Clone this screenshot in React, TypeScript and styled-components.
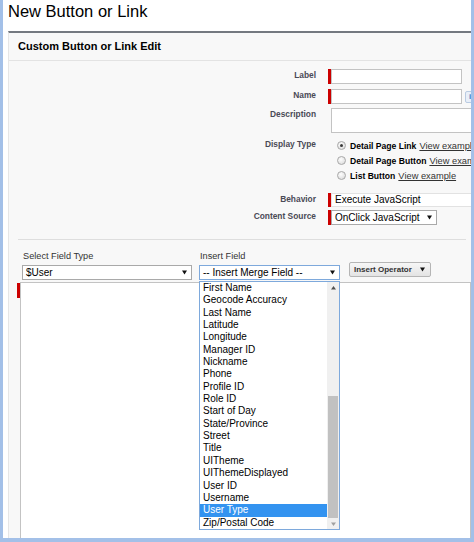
import React from "react";
import styled, { createGlobalStyle } from "styled-components";

const Global = createGlobalStyle`
  html, body { margin: 0; padding: 0; background: #fff; }
  body { font-family: "Liberation Sans", Arial, sans-serif; }
`;

const Frame = styled.div`
  position: relative;
  width: 474px;
  height: 542px;
  box-sizing: border-box;
  border-left: 3px solid #a3c0e8;
  border-right: 3px solid #a3c0e8;
  border-bottom: 4px solid #a3c0e8;
  background: #fff;
  display: flex;
  flex-direction: column;
  overflow: hidden;
  font-family: "Liberation Sans", Arial, sans-serif;
`;

const Title = styled.h1`
  margin: 0;
  height: 31px;
  box-sizing: border-box;
  padding: 2px 0 0 5px;
  font-size: 16.5px;
  line-height: 18px;
  font-weight: normal;
  color: #000;
  white-space: nowrap;
`;

const Panel = styled.div`
  flex: 1;
  min-height: 0;
  margin-left: 5px;
  display: flex;
  flex-direction: column;
  background: #f8f8f8;
  border-top: 2px solid #747980;
  border-left: 1px solid #e6e6e6;
`;

const PanelHeader = styled.div`
  height: 27px;
  line-height: 27px;
  padding-left: 9px;
  font-size: 11px;
  font-weight: bold;
  color: #000;
  border-bottom: 1px solid #e3e3e3;
  white-space: nowrap;
`;

const Form = styled.div`
  padding-top: 8px;
  display: flex;
  flex-direction: column;
`;

const FormRow = styled.div<{ $mt: number; $h: number }>`
  display: grid;
  grid-template-columns: 307px 1fr;
  column-gap: 12px;
  margin-top: ${(p) => p.$mt}px;
  height: ${(p) => p.$h}px;
`;

const FieldLabel = styled.div`
  text-align: right;
  font-size: 8.4px;
  font-weight: bold;
  line-height: 12px;
  color: #4a4a56;
  white-space: nowrap;
`;

const FieldCell = styled.div`
  display: flex;
  align-items: flex-start;
  min-width: 0;
  white-space: nowrap;
`;

const RequiredBar = styled.span<{ $h?: number }>`
  flex: none;
  width: 3px;
  height: ${(p) => p.$h ?? 15}px;
  background: #c00;
`;

const TextInput = styled.span<{ $w: number; $h?: number }>`
  flex: none;
  box-sizing: border-box;
  width: ${(p) => p.$w}px;
  height: ${(p) => p.$h ?? 15}px;
  background: #fff;
  border: 1px solid #c3c3c3;
`;

const TextBox = styled(TextInput)`
  margin-left: 3px;
`;

const InfoIcon = styled.span`
  flex: none;
  margin: 2px 0 0 3px;
  width: 10px;
  height: 12px;
  box-sizing: border-box;
  border: 1px solid #b9cbe2;
  border-radius: 2px;
  background: #e9eff8;
  color: #3a78c3;
  font-size: 8px;
  font-weight: bold;
  line-height: 10px;
  text-align: center;
`;

const Options = styled.div`
  padding-left: 9px;
  display: flex;
  flex-direction: column;
`;

const OptionLine = styled.div`
  height: 15px;
  display: flex;
  align-items: center;
  white-space: nowrap;
`;

const Radio = styled.span<{ $checked?: boolean }>`
  flex: none;
  position: relative;
  width: 9px;
  height: 9px;
  box-sizing: border-box;
  border-radius: 50%;
  border: 1px solid #a8a8a8;
  background: radial-gradient(circle at 40% 35%, #fdfdfd 0%, #e2e2e2 70%, #d2d2d2 100%);
  &::after {
    content: "";
    display: ${(p) => (p.$checked ? "block" : "none")};
    position: absolute;
    left: 2px;
    top: 2px;
    width: 3px;
    height: 3px;
    border-radius: 50%;
    background: #3a3a3a;
  }
`;

const OptionText = styled.span`
  margin-left: 4px;
  font-size: 8.6px;
  font-weight: bold;
  color: #000;
`;

const ExampleLink = styled.span`
  margin-left: 3px;
  font-size: 9.3px;
  color: #333;
  text-decoration: underline;
`;

const SelectBox = styled.span<{ $w: number; $h?: number; $focus?: boolean; $plain?: boolean }>`
  flex: none;
  box-sizing: border-box;
  width: ${(p) => p.$w}px;
  height: ${(p) => p.$h ?? 15}px;
  display: flex;
  align-items: center;
  justify-content: space-between;
  padding: 0 4px 0 3px;
  background: #fff;
  border: 1px solid ${(p) => (p.$focus ? "#7ea9dc" : p.$plain ? "#e2e2e2" : "#a9a9a9")};
  font-size: 10px;
  line-height: 12px;
  color: #000;
  white-space: nowrap;
`;

const Caret = () => (
  <svg width="5" height="5" viewBox="0 0 5 5">
    <path d="M0 0.5h5L2.5 4.5z" fill="#111" />
  </svg>
);

const Divider = styled.div`
  margin: 14px 5px 0 9px;
  height: 1px;
  background: #dedede;
`;

const Bottom = styled.div`
  flex: 1;
  min-height: 0;
  display: flex;
  flex-direction: column;
  padding-left: 8px;
`;

const FieldBar = styled.div`
  margin-top: 10px;
  padding-left: 5px;
  display: flex;
  align-items: flex-start;
`;

const FieldGroup = styled.div<{ $w: number; $ml?: number }>`
  position: relative;
  width: ${(p) => p.$w}px;
  margin-left: ${(p) => p.$ml ?? 0}px;
  display: flex;
  flex-direction: column;
`;

const SmallLabel = styled.div`
  height: 13px;
  line-height: 13px;
  padding-left: 1px;
  margin-bottom: 2px;
  font-size: 9.2px;
  color: #333;
  white-space: nowrap;
`;

const OperatorButton = styled.span`
  margin: 12px 0 0 10px;
  box-sizing: border-box;
  width: 82px;
  height: 15px;
  display: flex;
  align-items: center;
  justify-content: space-between;
  padding: 0 5px 0 4px;
  border: 1px solid #b5b5b5;
  border-radius: 2px;
  background: linear-gradient(#f7f7f7, #e3e3e3);
  font-size: 8px;
  font-weight: bold;
  color: #333;
  white-space: nowrap;
`;

const EditorRow = styled.div`
  flex: 1;
  margin-top: 2px;
  display: flex;
  align-items: flex-start;
  min-height: 0;
`;

const EditorBar = styled(RequiredBar)`
  margin-top: 1px;
`;

const Editor = styled.div`
  align-self: stretch;
  flex: 1;
  background: #fff;
  border: 1px solid #c3c3c3;
  border-bottom: none;
`;

const Dropdown = styled.div`
  position: absolute;
  left: 0;
  top: 31px;
  width: 141px;
  height: 249px;
  box-sizing: border-box;
  border: 1px solid #7ea9dc;
  background: #fff;
  z-index: 2;
  display: flex;
`;

const ItemList = styled.div`
  flex: 1;
  display: flex;
  flex-direction: column;
`;

const Item = styled.div<{ $selected?: boolean }>`
  height: 12.35px;
  line-height: 12.35px;
  padding-left: 3px;
  font-size: 10px;
  white-space: nowrap;
  color: ${(p) => (p.$selected ? "#fff" : "#000")};
  background: ${(p) => (p.$selected ? "#3393f0" : "transparent")};
`;

const Scrollbar = styled.div`
  position: relative;
  width: 12px;
  flex: none;
  background: #f0f0f0;
  display: flex;
  flex-direction: column;
  align-items: center;
`;

const ScrollArrow = styled.div`
  height: 11px;
  display: flex;
  align-items: center;
  justify-content: center;
`;

const ScrollThumb = styled.div`
  position: absolute;
  left: 1px;
  right: 1px;
  top: 114px;
  height: 122px;
  background: #c1c1c1;
`;

const fields = [
  "First Name",
  "Geocode Accuracy",
  "Last Name",
  "Latitude",
  "Longitude",
  "Manager ID",
  "Nickname",
  "Phone",
  "Profile ID",
  "Role ID",
  "Start of Day",
  "State/Province",
  "Street",
  "Title",
  "UITheme",
  "UIThemeDisplayed",
  "User ID",
  "Username",
  "User Type",
  "Zip/Postal Code",
];

const displayTypes = [
  { label: "Detail Page Link", checked: true },
  { label: "Detail Page Button", checked: false },
  { label: "List Button", checked: false },
];

export default function App() {
  return (
    <>
      <Global />
      <Frame>
        <Title>New Button or Link</Title>
        <Panel>
          <PanelHeader>Custom Button or Link Edit</PanelHeader>
          <Form>
            <FormRow $mt={0} $h={15}>
              <FieldLabel>Label</FieldLabel>
              <FieldCell>
                <RequiredBar />
                <TextInput $w={131} />
              </FieldCell>
            </FormRow>
            <FormRow $mt={5} $h={15}>
              <FieldLabel>Name</FieldLabel>
              <FieldCell>
                <RequiredBar />
                <TextInput $w={131} />
                <InfoIcon>i</InfoIcon>
              </FieldCell>
            </FormRow>
            <FormRow $mt={4} $h={25}>
              <FieldLabel>Description</FieldLabel>
              <FieldCell>
                <TextBox $w={200} $h={25} />
              </FieldCell>
            </FormRow>
            <FormRow $mt={5} $h={45}>
              <FieldLabel>Display Type</FieldLabel>
              <Options>
                {displayTypes.map((d) => (
                  <OptionLine key={d.label}>
                    <Radio $checked={d.checked} />
                    <OptionText>{d.label}</OptionText>
                    <ExampleLink>View example</ExampleLink>
                  </OptionLine>
                ))}
              </Options>
            </FormRow>
            <FormRow $mt={10} $h={14}>
              <FieldLabel>Behavior</FieldLabel>
              <FieldCell>
                <RequiredBar $h={14} />
                <SelectBox $w={200} $h={14} $plain>
                  Execute JavaScript
                </SelectBox>
              </FieldCell>
            </FormRow>
            <FormRow $mt={3} $h={15}>
              <FieldLabel>Content Source</FieldLabel>
              <FieldCell>
                <RequiredBar />
                <SelectBox $w={106}>
                  OnClick JavaScript
                  <Caret />
                </SelectBox>
              </FieldCell>
            </FormRow>
          </Form>
          <Divider />
          <Bottom>
            <FieldBar>
              <FieldGroup $w={170}>
                <SmallLabel>Select Field Type</SmallLabel>
                <SelectBox $w={170}>
                  $User
                  <Caret />
                </SelectBox>
              </FieldGroup>
              <FieldGroup $w={140} $ml={7}>
                <SmallLabel>Insert Field</SmallLabel>
                <SelectBox $w={141} $focus>
                  -- Insert Merge Field --
                  <Caret />
                </SelectBox>
                <Dropdown>
                  <ItemList>
                    {fields.map((f) => (
                      <Item key={f} $selected={f === "User Type"}>
                        {f}
                      </Item>
                    ))}
                  </ItemList>
                  <Scrollbar>
                    <ScrollArrow>
                      <svg width="5" height="4" viewBox="0 0 5 4">
                        <path d="M2.5 0L5 3.5H0z" fill="#505050" />
                      </svg>
                    </ScrollArrow>
                    <ScrollThumb />
                    <div style={{ flex: 1 }} />
                    <ScrollArrow>
                      <svg width="5" height="4" viewBox="0 0 5 4">
                        <path d="M0 0.5h5L2.5 4z" fill="#a0a0a0" />
                      </svg>
                    </ScrollArrow>
                  </Scrollbar>
                </Dropdown>
              </FieldGroup>
              <OperatorButton>
                Insert Operator
                <Caret />
              </OperatorButton>
            </FieldBar>
            <EditorRow>
              <EditorBar />
              <Editor />
            </EditorRow>
          </Bottom>
        </Panel>
      </Frame>
    </>
  );
}
